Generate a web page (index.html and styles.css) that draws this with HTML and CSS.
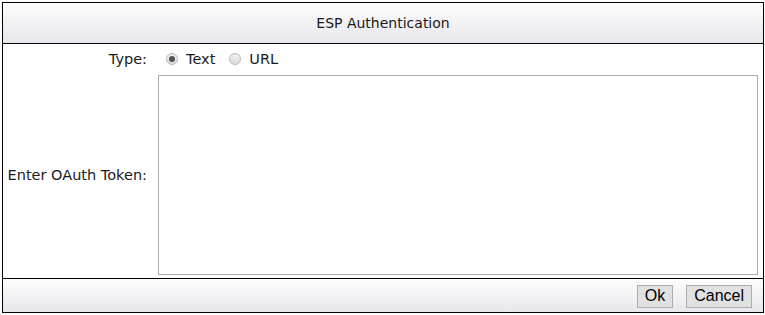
FILE: index.html
```html
<!DOCTYPE html>
<html lang="en">

<head>
    <meta charset="UTF-8">
    <title>ESP Authentication</title>
    <link rel="stylesheet" href="styles.css">
</head>

<body>
    <div class="dialog">
        <div class="dialog-header">ESP Authentication</div>

        <div class="dialog-body">
            <label class="field-label type-label">Type:</label>
            <div class="type-options">
                <label class="radio-option"><input type="radio" name="tokenType" checked> Text</label>
                <label class="radio-option"><input type="radio" name="tokenType"> URL</label>
            </div>

            <label class="field-label token-label" for="token">Enter OAuth Token:</label>
            <textarea id="token" class="token-box"></textarea>
        </div>

        <div class="dialog-footer">
            <button class="btn">Ok</button>
            <button class="btn">Cancel</button>
        </div>
    </div>
</body>

</html>
```

FILE: styles.css
```css
body {
    margin: 0;
    padding: 0;
    background-color: #ffffff;
    font-family: "DejaVu Sans", Tahoma, sans-serif;
    font-size: 14.5px;
    color: #1a1a1a;
}

.dialog {
    margin: 2px;
    width: 760px;
    height: 309px;
    border: 1px solid #000;
    display: flex;
    flex-direction: column;
    box-sizing: content-box;
}

.dialog-header {
    height: 40px;
    border-bottom: 1px solid #000;
    background: linear-gradient(to bottom, #fdfdfd, #e7e6ec);
    display: flex;
    align-items: center;
    justify-content: center;
    font-size: 14px;
}

.dialog-body {
    flex: 1;
    display: grid;
    grid-template-columns: 144px 600px;
    grid-template-rows: 29px 200px;
    row-gap: 2px;
    column-gap: 11px;
    padding: 0 5px 3px 0;
}

.field-label {
    text-align: right;
    align-self: center;
}

.type-options {
    display: flex;
    align-items: center;
    gap: 14px;
    padding-left: 8px;
}

.radio-option {
    display: flex;
    align-items: center;
    gap: 8px;
}

.radio-option input {
    appearance: none;
    -webkit-appearance: none;
    margin: 0;
    width: 12px;
    height: 12px;
    border: 1px solid #b8b8b8;
    border-radius: 50%;
    background: linear-gradient(to bottom, #f0f0f0, #dcdcdc);
    box-sizing: border-box;
    position: relative;
}

.radio-option input:checked::after {
    content: "";
    position: absolute;
    left: 2px;
    top: 2px;
    width: 6px;
    height: 6px;
    border-radius: 50%;
    background-color: #555;
}

.token-box {
    width: 600px;
    height: 200px;
    margin: 0;
    border: 1px solid #aaaaaa;
    box-sizing: border-box;
    resize: none;
}

.dialog-footer {
    height: 33px;
    border-top: 1px solid #000;
    background: linear-gradient(to bottom, #fdfdfd, #e7e6ec);
    display: flex;
    align-items: center;
    justify-content: flex-end;
    gap: 13px;
    padding-right: 11px;
}

.btn {
    font-family: "Liberation Sans", Arial, sans-serif;
    font-size: 16px;
    height: 23px;
    padding: 0 7px;
    background-color: #e1e1e1;
    border: 1px solid #adadad;
    color: #000;
    margin-top: 1px;
}
```
